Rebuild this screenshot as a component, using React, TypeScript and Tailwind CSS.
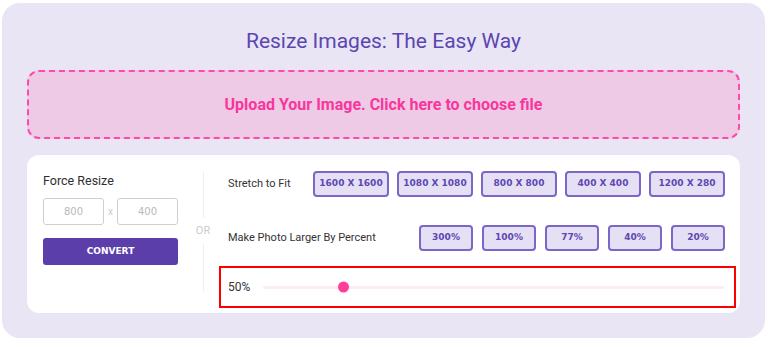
const sizes = ['1600 X 1600', '1080 X 1080', '800 X 800', '400 X 400', '1200 X 280'];
const percents = ['300%', '100%', '77%', '40%', '20%'];

function PresetButton({ label, wide }: { label: string; wide?: boolean }) {
  return (
    <button
      type="button"
      className={`${wide ? 'w-[76px]' : 'w-[54px]'} h-[26px] rounded-[4px] border-2 border-[#7c66c8] bg-[#e6e0f4] text-[9px] font-bold text-[#5d47b3] font-['DejaVu_Sans',sans-serif] flex items-center justify-center`}
    >
      {label}
    </button>
  );
}

export default function App() {
  return (
    <div className="w-[768px] h-[340px] bg-white pt-[3px] pl-[2px] font-['Roboto',sans-serif]">
      <div className="w-[763px] h-[335px] rounded-[18px] bg-[#e9e5f4] px-[25px] pt-[24px]">
        <h1 className="h-[28px] leading-[28px] text-center text-[21px] text-[#5b46b1]">
          Resize Images: The Easy Way
        </h1>

        <div className="mt-[15px] h-[69px] rounded-[12px] border-2 border-dashed border-[#ff4aa8] bg-[#eecae6] flex items-center justify-center">
          <span className="text-[16px] font-bold text-[#f8369c]">
            Upload Your Image. Click here to choose file
          </span>
        </div>

        <div className="mt-[16px] h-[158px] rounded-[12px] bg-white flex">
          {/* force resize */}
          <div className="ml-[16px] w-[135px] pt-[17px]">
            <div className="h-[18px] leading-[18px] text-[12.5px] text-[#2f2f2f]">Force Resize</div>
            <div className="mt-[8px] flex items-center">
              <input
                placeholder="800"
                className="w-[61px] h-[27px] rounded-[3px] border border-[#cfcfcf] text-center text-[10px] font-['DejaVu_Sans',sans-serif] placeholder:text-[#b9b9b9] outline-none"
              />
              <span className="w-[13px] text-center text-[10px] text-[#cccccc]">x</span>
              <input
                placeholder="400"
                className="w-[61px] h-[27px] rounded-[3px] border border-[#cfcfcf] text-center text-[10px] font-['DejaVu_Sans',sans-serif] placeholder:text-[#b9b9b9] outline-none"
              />
            </div>
            <button
              type="button"
              className="mt-[13px] w-[135px] h-[27px] rounded-[3px] bg-[#5b3ea9] text-white text-[9px] font-bold font-['DejaVu_Sans',sans-serif]"
            >
              CONVERT
            </button>
          </div>

          {/* divider */}
          <div className="ml-[17px] w-[16px] pt-[17px] flex flex-col items-center">
            <div className="w-px h-[46px] bg-[#eeeeee]" />
            <div className="h-[26px] leading-[26px] text-[11px] text-[#cccccc]">OR</div>
            <div className="w-px h-[47px] bg-[#eeeeee]" />
          </div>

          {/* presets */}
          <div className="ml-[8px] w-[517px] pt-[16px]">
            <div className="pl-[9px] pr-[11px] flex items-center justify-between">
              <span className="text-[11px] text-[#333]">Stretch to Fit</span>
              <div className="flex gap-[8px]">
                {sizes.map((s) => (
                  <PresetButton key={s} label={s} wide />
                ))}
              </div>
            </div>
            <div className="mt-[28px] pl-[9px] pr-[11px] flex items-center justify-between">
              <span className="text-[11px] text-[#333]">Make Photo Larger By Percent</span>
              <div className="flex gap-[9px]">
                {percents.map((p) => (
                  <PresetButton key={p} label={p} />
                ))}
              </div>
            </div>
            <div className="mt-[15px] h-[42px] border-2 border-[#ff0000] flex items-center pl-[7px] pr-[10px]">
              <span className="w-[35px] text-[12px] text-[#333]">50%</span>
              <div className="relative flex-1 h-[3px] rounded-full bg-[#fbedf3]">
                <div className="absolute left-[75px] top-1/2 -translate-y-1/2 w-[11px] h-[11px] rounded-full bg-[#ff3d9c]" />
              </div>
            </div>
          </div>
        </div>
      </div>
    </div>
  );
}
